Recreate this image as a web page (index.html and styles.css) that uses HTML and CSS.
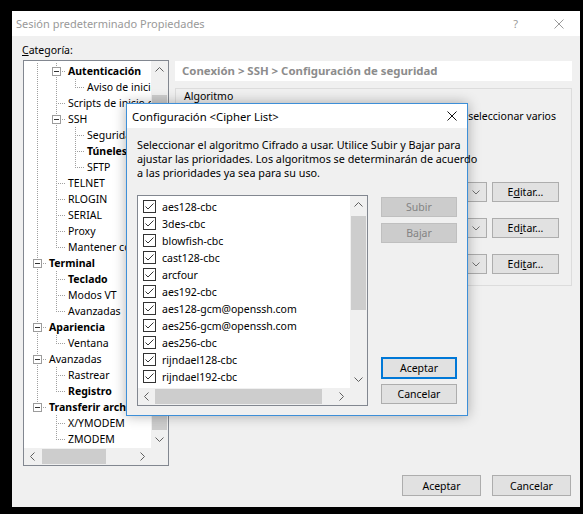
FILE: index.html
```html
<!DOCTYPE html>
<html lang="es">
<head>
  <meta charset="utf-8">
  <title>Sesión predeterminado Propiedades</title>
  <link rel="stylesheet" href="styles.css">
</head>
<body>

  <div class="window">
    <div class="titlebar">
      <span class="title">Sesión predeterminado Propiedades</span>
      <span class="help">?</span>
      <svg class="close" width="10" height="10" viewBox="0 0 10 10"><path d="M0.5 0.5L9.5 9.5M9.5 0.5L0.5 9.5" stroke="#9a9a9a" fill="none"/></svg>
    </div>

    <div class="main">
      <div class="left">
        <div class="cat-label"><u>C</u>ategoría:</div>
        <div class="tree">
          <div class="tree-items">
            <div class="row"><span class="c v"></span><span class="c t"><svg class="box" width="9" height="9"><rect x="0.5" y="0.5" width="8" height="8" fill="#fff" stroke="#9c9c9c"/><path d="M2 4.5H7" stroke="#333"/></svg></span><span class="label bold">Autenticación</span></div>
            <div class="row"><span class="c v"></span><span class="c v"></span><span class="c l"></span><span class="label">Aviso de inicio de sesión</span></div>
            <div class="row"><span class="c v"></span><span class="c t"></span><span class="label">Scripts de inicio de sesión</span></div>
            <div class="row"><span class="c v"></span><span class="c t"><svg class="box" width="9" height="9"><rect x="0.5" y="0.5" width="8" height="8" fill="#fff" stroke="#9c9c9c"/><path d="M2 4.5H7" stroke="#333"/></svg></span><span class="label">SSH</span></div>
            <div class="row"><span class="c v"></span><span class="c v"></span><span class="c t"></span><span class="label">Seguridad</span></div>
            <div class="row"><span class="c v"></span><span class="c v"></span><span class="c t"></span><span class="label bold">Túneles</span></div>
            <div class="row"><span class="c v"></span><span class="c v"></span><span class="c l"></span><span class="label">SFTP</span></div>
            <div class="row"><span class="c v"></span><span class="c t"></span><span class="label">TELNET</span></div>
            <div class="row"><span class="c v"></span><span class="c t"></span><span class="label">RLOGIN</span></div>
            <div class="row"><span class="c v"></span><span class="c t"></span><span class="label">SERIAL</span></div>
            <div class="row"><span class="c v"></span><span class="c t"></span><span class="label">Proxy</span></div>
            <div class="row"><span class="c v"></span><span class="c l"></span><span class="label">Mantener conexión</span></div>
            <div class="row"><span class="c t"><svg class="box" width="9" height="9"><rect x="0.5" y="0.5" width="8" height="8" fill="#fff" stroke="#9c9c9c"/><path d="M2 4.5H7" stroke="#333"/></svg></span><span class="label bold">Terminal</span></div>
            <div class="row"><span class="c v"></span><span class="c t"></span><span class="label bold">Teclado</span></div>
            <div class="row"><span class="c v"></span><span class="c t"></span><span class="label">Modos VT</span></div>
            <div class="row"><span class="c v"></span><span class="c l"></span><span class="label">Avanzadas</span></div>
            <div class="row"><span class="c t"><svg class="box" width="9" height="9"><rect x="0.5" y="0.5" width="8" height="8" fill="#fff" stroke="#9c9c9c"/><path d="M2 4.5H7" stroke="#333"/></svg></span><span class="label bold">Apariencia</span></div>
            <div class="row"><span class="c v"></span><span class="c l"></span><span class="label">Ventana</span></div>
            <div class="row"><span class="c t"><svg class="box" width="9" height="9"><rect x="0.5" y="0.5" width="8" height="8" fill="#fff" stroke="#9c9c9c"/><path d="M2 4.5H7" stroke="#333"/></svg></span><span class="label">Avanzadas</span></div>
            <div class="row"><span class="c v"></span><span class="c t"></span><span class="label">Rastrear</span></div>
            <div class="row"><span class="c v"></span><span class="c l"></span><span class="label bold">Registro</span></div>
            <div class="row"><span class="c l"><svg class="box" width="9" height="9"><rect x="0.5" y="0.5" width="8" height="8" fill="#fff" stroke="#9c9c9c"/><path d="M2 4.5H7" stroke="#333"/></svg></span><span class="label bold">Transferir archivos</span></div>
            <div class="row"><span class="c"></span><span class="c t"></span><span class="label">X/YMODEM</span></div>
            <div class="row"><span class="c"></span><span class="c l"></span><span class="label">ZMODEM</span></div>
          </div>
          <div class="vscroll">
            <div class="arrow"><svg width="9" height="5"><path d="M0.5 4.5L4.5 0.5L8.5 4.5" stroke="#606060" fill="none"/></svg></div>
            <div class="track"><div class="thumb tree-vthumb"></div></div>
            <div class="arrow"><svg width="9" height="5"><path d="M0.5 0.5L4.5 4.5L8.5 0.5" stroke="#606060" fill="none"/></svg></div>
          </div>
          <div class="hscroll">
            <div class="arrow"><svg width="5" height="9"><path d="M4.5 0.5L0.5 4.5L4.5 8.5" stroke="#606060" fill="none"/></svg></div>
            <div class="track"><div class="thumb tree-hthumb"></div></div>
            <div class="arrow"><svg width="5" height="9"><path d="M0.5 0.5L4.5 4.5L0.5 8.5" stroke="#606060" fill="none"/></svg></div>
          </div>
          <div class="corner"></div>
        </div>
      </div>

      <div class="right">
        <div class="crumb">Conexión &gt; SSH &gt; Configuración de seguridad</div>
        <div class="group">
          <div class="group-label">Algoritmo</div>
          <div class="group-hint">Puede seleccionar varios</div>
          <div class="algo-row first">
            <div class="combo"><svg width="8" height="5"><path d="M0.5 0.5L4 4L7.5 0.5" stroke="#707070" fill="none"/></svg></div>
            <button class="btn">E<u>d</u>itar...</button>
          </div>
          <div class="algo-row">
            <div class="combo"><svg width="8" height="5"><path d="M0.5 0.5L4 4L7.5 0.5" stroke="#707070" fill="none"/></svg></div>
            <button class="btn">Ed<u>i</u>tar...</button>
          </div>
          <div class="algo-row">
            <div class="combo"><svg width="8" height="5"><path d="M0.5 0.5L4 4L7.5 0.5" stroke="#707070" fill="none"/></svg></div>
            <button class="btn">Edi<u>t</u>ar...</button>
          </div>
        </div>
      </div>
    </div>

    <div class="footer">
      <button class="btn">Aceptar</button>
      <button class="btn">Cancelar</button>
    </div>

    <div class="dialog">
      <div class="dlg-title">
        <span class="title">Configuración &lt;Cipher List&gt;</span>
        <svg class="close" width="10" height="10" viewBox="0 0 10 10"><path d="M0.5 0.5L9.5 9.5M9.5 0.5L0.5 9.5" stroke="#111" fill="none"/></svg>
      </div>
      <div class="dlg-body">
        <p class="dlg-desc">Seleccionar el algoritmo Cifrado a usar. Utilice Subir y Bajar para<br>ajustar las prioridades. Los algoritmos se determinarán de acuerdo<br>a las prioridades ya sea para su uso.</p>
        <div class="dlg-main">
          <div class="listbox">
            <div class="list-items">
              <div class="item"><svg class="check" width="13" height="13"><rect x="0.5" y="0.5" width="12" height="12" fill="#fff" stroke="#333"/><path d="M2.5 6.5L5 9L10.5 3.5" stroke="#333" fill="none"/></svg>aes128-cbc</div>
              <div class="item"><svg class="check" width="13" height="13"><rect x="0.5" y="0.5" width="12" height="12" fill="#fff" stroke="#333"/><path d="M2.5 6.5L5 9L10.5 3.5" stroke="#333" fill="none"/></svg>3des-cbc</div>
              <div class="item"><svg class="check" width="13" height="13"><rect x="0.5" y="0.5" width="12" height="12" fill="#fff" stroke="#333"/><path d="M2.5 6.5L5 9L10.5 3.5" stroke="#333" fill="none"/></svg>blowfish-cbc</div>
              <div class="item"><svg class="check" width="13" height="13"><rect x="0.5" y="0.5" width="12" height="12" fill="#fff" stroke="#333"/><path d="M2.5 6.5L5 9L10.5 3.5" stroke="#333" fill="none"/></svg>cast128-cbc</div>
              <div class="item"><svg class="check" width="13" height="13"><rect x="0.5" y="0.5" width="12" height="12" fill="#fff" stroke="#333"/><path d="M2.5 6.5L5 9L10.5 3.5" stroke="#333" fill="none"/></svg>arcfour</div>
              <div class="item"><svg class="check" width="13" height="13"><rect x="0.5" y="0.5" width="12" height="12" fill="#fff" stroke="#333"/><path d="M2.5 6.5L5 9L10.5 3.5" stroke="#333" fill="none"/></svg>aes192-cbc</div>
              <div class="item"><svg class="check" width="13" height="13"><rect x="0.5" y="0.5" width="12" height="12" fill="#fff" stroke="#333"/><path d="M2.5 6.5L5 9L10.5 3.5" stroke="#333" fill="none"/></svg>aes128-gcm@openssh.com</div>
              <div class="item"><svg class="check" width="13" height="13"><rect x="0.5" y="0.5" width="12" height="12" fill="#fff" stroke="#333"/><path d="M2.5 6.5L5 9L10.5 3.5" stroke="#333" fill="none"/></svg>aes256-gcm@openssh.com</div>
              <div class="item"><svg class="check" width="13" height="13"><rect x="0.5" y="0.5" width="12" height="12" fill="#fff" stroke="#333"/><path d="M2.5 6.5L5 9L10.5 3.5" stroke="#333" fill="none"/></svg>aes256-cbc</div>
              <div class="item"><svg class="check" width="13" height="13"><rect x="0.5" y="0.5" width="12" height="12" fill="#fff" stroke="#333"/><path d="M2.5 6.5L5 9L10.5 3.5" stroke="#333" fill="none"/></svg>rijndael128-cbc</div>
              <div class="item"><svg class="check" width="13" height="13"><rect x="0.5" y="0.5" width="12" height="12" fill="#fff" stroke="#333"/><path d="M2.5 6.5L5 9L10.5 3.5" stroke="#333" fill="none"/></svg>rijndael192-cbc</div>
            </div>
            <div class="vscroll">
              <div class="arrow"><svg width="9" height="5"><path d="M0.5 4.5L4.5 0.5L8.5 4.5" stroke="#606060" fill="none"/></svg></div>
              <div class="track"><div class="thumb list-vthumb"></div></div>
              <div class="arrow"><svg width="9" height="5"><path d="M0.5 0.5L4.5 4.5L8.5 0.5" stroke="#606060" fill="none"/></svg></div>
            </div>
            <div class="hscroll">
              <div class="arrow"><svg width="5" height="9"><path d="M4.5 0.5L0.5 4.5L4.5 8.5" stroke="#606060" fill="none"/></svg></div>
              <div class="track"><div class="thumb list-hthumb"></div></div>
              <div class="arrow"><svg width="5" height="9"><path d="M0.5 0.5L4.5 4.5L0.5 8.5" stroke="#606060" fill="none"/></svg></div>
            </div>
            <div class="corner"></div>
          </div>
          <div class="dlg-buttons">
            <button class="btn off">Subir</button>
            <button class="btn off">Bajar</button>
            <button class="btn default">Aceptar</button>
            <button class="btn">Cancelar</button>
          </div>
        </div>
      </div>
    </div>
  </div>

</body>
</html>
```

FILE: styles.css
```css
* {
  box-sizing: border-box;
}
body {
  margin: 0;
  width: 583px;
  height: 514px;
  overflow: hidden;
  background: #000;
  font-family: "Noto Sans", "Open Sans", sans-serif;
  font-size: 10.5px;
  color: #000;
}
u {
  text-decoration-thickness: 1px;
  text-underline-offset: 1px;
}
.window {
  position: relative;
  width: 568px;
  height: 496px;
  margin: 11px 0 0 12px;
  background: #f0f0f0;
  display: flex;
  flex-direction: column;
}
.titlebar {
  height: 25px;
  flex: none;
  background: #fff;
  display: flex;
  align-items: center;
  padding-left: 4px;
  color: #999;
  font-size: 11px;
}
.titlebar .title {
  flex: 1;
}
.titlebar .help {
  margin-right: 36px;
}
.titlebar .close {
  margin-right: 16px;
}
.main {
  display: flex;
  padding: 7px 8px 0 10px;
}
.left {
  width: 147px;
  flex: none;
}
.cat-label {
  height: 14px;
  line-height: 14px;
}

/* tree view */
.tree {
  margin: 3px 0 0 1px;
  width: 146px;
  height: 406px;
  border: 1px solid #828790;
  background: #fff;
  display: grid;
  grid-template-columns: 1fr 17px;
  grid-template-rows: 1fr 17px;
}
.tree-items {
  overflow: hidden;
  padding: 2px 0 0 4px;
}
.row {
  display: flex;
  align-items: center;
  height: 16px;
  white-space: nowrap;
}
.c {
  flex: none;
  width: 19px;
  height: 16px;
  display: flex;
  align-items: center;
}
.c.v {
  background: repeating-linear-gradient(#a0a0a0 0 1px, transparent 1px 2px) 9px 0 / 1px 16px no-repeat;
}
.c.t {
  background:
    repeating-linear-gradient(#a0a0a0 0 1px, transparent 1px 2px) 9px 0 / 1px 16px no-repeat,
    repeating-linear-gradient(90deg, #a0a0a0 0 1px, transparent 1px 2px) 9px 8px / 10px 1px no-repeat;
}
.c.l {
  background:
    repeating-linear-gradient(#a0a0a0 0 1px, transparent 1px 2px) 9px 0 / 1px 9px no-repeat,
    repeating-linear-gradient(90deg, #a0a0a0 0 1px, transparent 1px 2px) 9px 8px / 10px 1px no-repeat;
}
.c .box {
  margin-left: 5px;
}
.label {
  margin-left: 2px;
}
.bold {
  font-weight: 700;
}

/* scrollbars */
.vscroll {
  background: #f0f0f0;
  display: flex;
  flex-direction: column;
}
.hscroll {
  background: #f0f0f0;
  display: flex;
}
.arrow {
  flex: none;
  height: 17px;
  display: flex;
  align-items: center;
  justify-content: center;
}
.hscroll .arrow {
  width: 17px;
  height: auto;
}
.track {
  flex: 1;
}
.hscroll .track {
  padding-top: 1px;
}
.vscroll .track {
  padding: 0 1px;
}
.thumb {
  background: #cdcdcd;
}
.hscroll .thumb {
  height: 15px;
}
.corner {
  background: #f0f0f0;
}
.tree-vthumb {
  margin-top: 17px;
  height: 335px;
}
.tree-hthumb {
  margin-left: 1px;
  width: 64px;
}
.list-vthumb {
  margin-top: 3px;
  height: 94px;
}
.list-hthumb {
  width: 167px;
}

/* right side */
.right {
  flex: 1;
  margin: 18px 0 0 6px;
}
.crumb {
  height: 20px;
  line-height: 20px;
  background: #fff;
  padding-left: 7px;
  font-weight: 700;
  font-size: 11.4px;
  color: #8c8c8c;
}
.group {
  margin-top: 7px;
  height: 198px;
  border: 1px solid #dcdcdc;
  padding: 0 12px 0 8px;
}
.group-label {
  line-height: 14px;
}
.group-hint {
  margin-top: 6px;
  line-height: 14px;
  text-align: right;
  padding-right: 3px;
  white-space: nowrap;
}
.algo-row {
  display: flex;
  gap: 5px;
  height: 20px;
  margin-top: 16px;
}
.algo-row.first {
  margin-top: 59px;
}
.combo {
  flex: 1;
  background: #e5e5e5;
  border: 1px solid #acacac;
  display: flex;
  align-items: center;
  justify-content: flex-end;
  padding-right: 6px;
}
.btn {
  font: inherit;
  color: #000;
  background: #e1e1e1;
  border: 1px solid #adadad;
  padding: 0;
}
.algo-row .btn {
  width: 67px;
}
.footer {
  margin-top: auto;
  display: flex;
  justify-content: flex-end;
  gap: 11px;
  padding: 0 9px 11px 0;
}
.footer .btn {
  width: 79px;
  height: 21px;
}

/* cipher list dialog */
.dialog {
  position: absolute;
  left: 114px;
  top: 92px;
  width: 342px;
  height: 313px;
  border: 1px solid #3d8fd8;
  background: #f0f0f0;
  box-shadow: 0 0 12px rgba(0, 0, 0, 0.3);
  display: flex;
  flex-direction: column;
}
.dlg-title {
  height: 24px;
  flex: none;
  background: #fff;
  display: flex;
  align-items: center;
  padding-left: 5px;
  font-size: 11.3px;
}
.dlg-title .title {
  flex: 1;
}
.dlg-title .close {
  margin-right: 10px;
}
.dlg-body {
  flex: 1;
  padding: 10px 10px 0;
}
.dlg-desc {
  margin: 0;
  font-size: 10.8px;
  line-height: 14px;
  white-space: nowrap;
}
.dlg-main {
  display: flex;
  gap: 13px;
  margin-top: 15px;
}
.listbox {
  width: 231px;
  height: 211px;
  border: 1px solid #828790;
  background: #fff;
  display: grid;
  grid-template-columns: 1fr 17px;
  grid-template-rows: 1fr 17px;
}
.list-items {
  overflow: hidden;
  padding: 2px 0 0 5px;
}
.item {
  height: 17px;
  display: flex;
  align-items: center;
  white-space: nowrap;
}
.check {
  flex: none;
  margin-right: 6px;
}
.dlg-buttons {
  width: 76px;
  display: flex;
  flex-direction: column;
  gap: 6px;
  padding: 2px 0;
}
.dlg-buttons .btn {
  height: 20px;
}
.dlg-buttons .default {
  margin-top: auto;
  height: 22px;
  border: 2px solid #0078d7;
}
.dlg-buttons .default + .btn {
  margin-top: -1px;
}
.btn.off {
  background: #cccccc;
  border-color: #bfbfbf;
  color: #838383;
}
```
